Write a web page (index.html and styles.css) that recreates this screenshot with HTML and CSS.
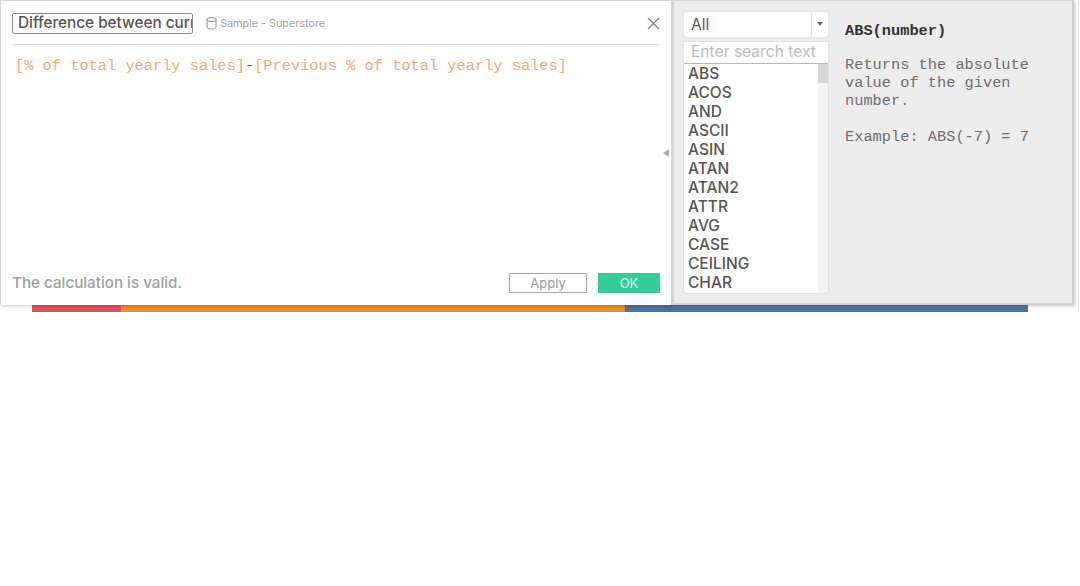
FILE: index.html
```html
<!DOCTYPE html>
<html lang="en">
<head>
<meta charset="utf-8">
<title>Calculation editor</title>
<link rel="stylesheet" href="styles.css">
</head>
<body>
<div class="dialog">
  <section class="editor">
    <header class="head">
      <div class="name"><span class="name-text">Difference between current</span></div>
      <svg class="db" width="11" height="13" viewBox="0 0 11 13" fill="none" stroke="#8a8a8a" stroke-width="1"><ellipse cx="5.500" cy="2.500" rx="4.500" ry="2"/><path d="M1 2.500v7.500c0 1.100 2 2 4.500 2s4.500-.9 4.500-2V2.500"/></svg>
      <span class="source">Sample - Superstore</span>
      <svg class="close" width="13" height="13" viewBox="0 0 13 13" stroke="#777" stroke-width="1.200"><path d="M1 1l11 11M12 1L1 12"/></svg>
    </header>
    <div class="formula"><span class="field">[% of total yearly sales]</span><span class="op">-</span><span class="field">[Previous % of total yearly sales]</span></div>
    <footer class="foot">
      <span class="status">The calculation is valid.</span>
      <span class="btn apply">Apply</span>
      <span class="btn ok">OK</span>
    </footer>
    <span class="collapse"></span>
  </section>
  <section class="functions">
    <div class="picker">
      <div class="select"><span class="select-text">All</span><span class="select-arrow"></span></div>
      <div class="search">Enter search text</div>
      <div class="list">
        <ul class="items">
          <li>ABS</li><li>ACOS</li><li>AND</li><li>ASCII</li><li>ASIN</li><li>ATAN</li><li>ATAN2</li><li>ATTR</li><li>AVG</li><li>CASE</li><li>CEILING</li><li>CHAR</li>
        </ul>
        <div class="scroll"><div class="thumb"></div></div>
      </div>
    </div>
    <div class="help">
      <p class="sig">ABS(number)</p>
      <p class="desc">Returns the absolute value of the given number.</p>
      <p class="desc">Example: ABS(-7) = 7</p>
    </div>
  </section>
</div>
<div class="strip"><span class="seg red"></span><span class="seg orange"></span><span class="seg blue"></span></div>
<div class="edge"></div>
</body>
</html>
```
FILE: styles.css
```css
html, body { margin: 0; padding: 0; background: #fff; height: 586px; overflow: hidden; }
body { font-family: Inter, "Noto Sans", sans-serif; position: relative; }
.dialog {
  display: flex; width: 1074px; height: 305px; background: #fff;
  border-top: 1px solid #d4d4d4; border-left: 1px solid #d4d4d4; box-sizing: border-box;
  box-shadow: 1px 1px 3px rgba(0,0,0,.22); position: relative; z-index: 1;
}
.editor { width: 670px; flex: none; box-sizing: border-box; padding: 11px 11px 12px 11px; display: flex; flex-direction: column; position: relative; }
.head { display: flex; align-items: center; height: 22px; padding-bottom: 10px; border-bottom: 1px solid #d8d8d8; }
.name { width: 181px; height: 21px; box-sizing: border-box; border: 1px solid #8c8c8c; border-radius: 2px; padding: 0 0 0 5px; overflow: hidden; white-space: nowrap; font-size: 15.300px; line-height: 18px; color: #555; font-weight: 500; }
.db { margin-left: 13px; }
.source { margin-left: 3px; font-size: 10.800px; color: #a3a3a3; }
.close { margin-left: auto; margin-right: 0; }
.formula { flex: 1; padding-top: 11px; padding-left: 3px; font-family: "Liberation Mono", monospace; font-size: 15.33px; line-height: 20px; white-space: pre; }
.field { color: #f6a970; }
.op { color: #555; }
.foot { display: flex; align-items: center; height: 21px; }
.status { font-size: 15.200px; color: #a0a0a0; font-weight: 500; margin-right: auto; }
.btn { height: 20px; line-height: 20px; text-align: center; font-size: 13px; box-sizing: border-box; }
.apply { width: 78px; border: 1px solid #a8a8a8; line-height: 19px; color: #999; margin-right: 11px; }
.ok { width: 62px; background: #36cc98; color: #d6f5ea; }
.collapse { position: absolute; right: 2px; top: 148px; border: 4px solid transparent; border-left-width: 0; border-right: 6px solid #aaa; }
.functions { flex: 1; display: flex; background: #ededed; border-left: 3px solid #d6d6d6; padding: 11px 0 0 10px; box-sizing: border-box; border-right: 2px solid #d0d0d0; border-bottom: 2px solid #d0d0d0; }
.picker { width: 144px; flex: none; display: flex; flex-direction: column; }
.select { height: 25px; background: #fff; display: flex; border-radius: 2px; box-shadow: 0 0 1px #bbb; }
.select-text { flex: 1; padding-left: 7px; font-size: 15.500px; line-height: 25px; color: #555; }
.select-arrow { width: 16px; border-left: 1px solid #e4e4e4; position: relative; }
.select-arrow::after { content: ""; position: absolute; left: 5px; top: 10px; border: 3px solid transparent; border-top: 4px solid #666; border-bottom: 0; }
.search { height: 21px; margin-top: 5px; background: #fff; border-bottom: 1px solid #bbb; box-shadow: 0 0 1px #bbb; padding-left: 7px; font-size: 15.600px; line-height: 20px; color: #bcbcbc; white-space: nowrap; }
.list { height: 229px; display: flex; background: #fff; box-shadow: 0 0 1px #888; border-radius: 0 0 2px 2px; overflow: hidden; }
.items { flex: 1; list-style: none; margin: 0; padding: 0 0 0 4px; font-size: 15.500px; line-height: 19px; color: #555; font-weight: 500; }
.scroll { width: 10px; background: #f4f4f4; }
.thumb { height: 19px; background: #d6d6d6; }
.help { width: 200px; margin-left: 17px; padding-top: 10px; font-family: "Liberation Mono", monospace; font-size: 15.33px; line-height: 18px; color: #6e6e6e; }
.help p { margin: 0; }
.sig { font-weight: 700; color: #333; margin-bottom: 16px !important; }
.desc { margin-bottom: 18px !important; }
.strip { position: absolute; left: 32px; top: 305px; width: 996px; height: 7px; display: flex; }
.seg { display: block; height: 100%; }
.red { width: 89px; background: #d9535f; }
.orange { width: 504px; background: #e88d2b; }
.blue { flex: 1; background: #4a739f; }
.edge { position: absolute; left: 1078px; top: 0; width: 1px; height: 312px; background: #e0e0e0; }
```
